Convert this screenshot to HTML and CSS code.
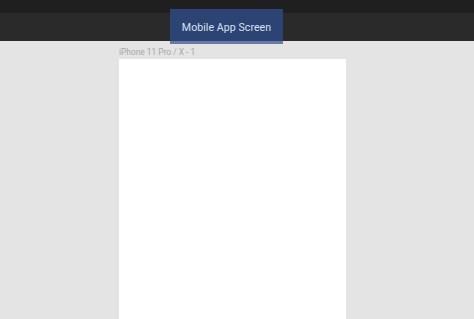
FILE: index.html
```html
<!DOCTYPE html>
<html lang="en">
<head>
    <meta charset="UTF-8">
    <title>Mobile App Screen</title>
    <link rel="stylesheet" href="styles.css">
</head>
<body>
    <!-- 顶部栏 -->
    <div class="topbar"></div>
    <div class="toolbar">
        <div class="tab">Mobile App Screen</div>
    </div>

    <!-- 画布 -->
    <div class="canvas">
        <div class="artboard">
            <div class="artboard-label">iPhone 11 Pro / X - 1</div>
            <div class="artboard-frame"></div>
        </div>
    </div>
</body>
</html>
```
FILE: styles.css
```css
*{
    margin: 0;
    padding: 0;
    box-sizing: border-box;
}
html, body{
    height: 100%;
}
body{
    font-family: "Roboto", "Liberation Sans", sans-serif;
    background-color: #e4e4e4;
    display: flex;
    flex-direction: column;
    overflow: hidden;
}

/* 顶部栏 */
.topbar{
    height: 13px;
    background-color: #1f1f1f;
}
.toolbar{
    height: 28px;
    background-color: #2a2a2a;
    display: flex;
    align-items: flex-start;
    padding-left: 170px;
}
.tab{
    position: relative;
    z-index: 1;
    width: 113px;
    height: 35px;
    margin-top: -4px;
    background-color: #2c4474;
    border-bottom: 3px solid #6a7aa6;
    color: #d8e0f0;
    font-size: 10.6px;
    letter-spacing: 0.05px;
    display: flex;
    align-items: center;
    justify-content: center;
    padding-top: 4px;
}

/* 画布 */
.canvas{
    flex: 1;
    display: flex;
    padding-left: 119px;
    padding-top: 6px;
}
.artboard{
    width: 227px;
    display: flex;
    flex-direction: column;
}
.artboard-label{
    font-size: 8.4px;
    color: #a6a6a6;
    height: 12px;
    line-height: 10px;
}
.artboard-frame{
    flex: 1;
    background-color: #fff;
}
```
